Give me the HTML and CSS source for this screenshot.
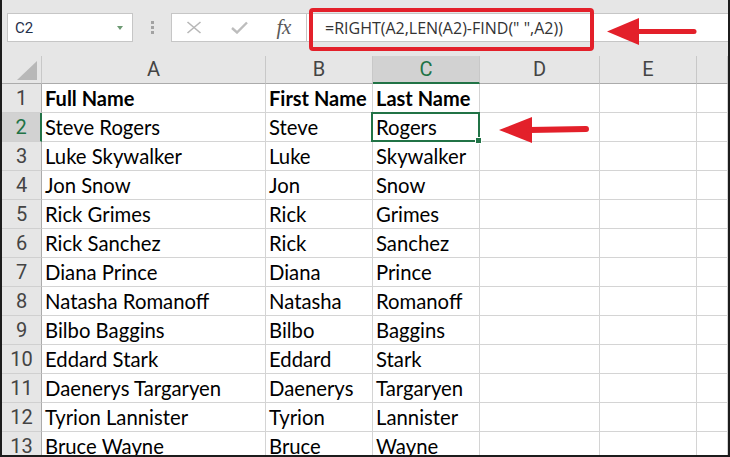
FILE: index.html
```html
<!DOCTYPE html>
<html>
<head>
<meta charset="utf-8">
<link rel="stylesheet" href="styles.css">
</head>
<body>
<div class="frame">
  <div class="toolbar">
    <div class="namebox"><span class="ref">C2</span><span class="dd"></span></div>
    <div class="grip"><i></i><i></i><i></i></div>
    <div class="fxbox">
      <span class="btn"><svg width="16" height="13" viewBox="0 0 16 13"><path d="M1.5 1 L14.5 12 M14.5 1 L1.5 12" stroke="#b7b7b7" stroke-width="1.6" fill="none"/></svg></span>
      <span class="btn"><svg width="17" height="13" viewBox="0 0 17 13"><path d="M1 7 L6 11.5 L16 1.5" stroke="#bdbdbd" stroke-width="2.4" fill="none"/></svg></span>
      <span class="btn fx">fx</span>
    </div>
    <div class="formula">=RIGHT(A2,LEN(A2)-FIND(" ",A2))</div>
  </div>
  <div class="sheet">
    <div class="row head">
      <div class="corner"><svg width="20" height="19" viewBox="0 0 20 19"><polygon points="20,0 20,19 0,19" fill="#b8b8b8"/></svg></div>
      <div class="ch">A</div><div class="ch">B</div><div class="ch on">C</div><div class="ch">D</div><div class="ch">E</div><div class="ch"></div>
    </div>
    <div class="row"><div class="rh">1</div><div class="c b">Full Name</div><div class="c b">First Name</div><div class="c b">Last Name</div><div class="c"></div><div class="c"></div><div class="c"></div></div>
    <div class="row"><div class="rh on">2</div><div class="c">Steve Rogers</div><div class="c">Steve</div><div class="c sel">Rogers</div><div class="c"></div><div class="c"></div><div class="c"></div></div>
    <div class="row"><div class="rh">3</div><div class="c">Luke Skywalker</div><div class="c">Luke</div><div class="c">Skywalker</div><div class="c"></div><div class="c"></div><div class="c"></div></div>
    <div class="row"><div class="rh">4</div><div class="c">Jon Snow</div><div class="c">Jon</div><div class="c">Snow</div><div class="c"></div><div class="c"></div><div class="c"></div></div>
    <div class="row"><div class="rh">5</div><div class="c">Rick Grimes</div><div class="c">Rick</div><div class="c">Grimes</div><div class="c"></div><div class="c"></div><div class="c"></div></div>
    <div class="row"><div class="rh">6</div><div class="c">Rick Sanchez</div><div class="c">Rick</div><div class="c">Sanchez</div><div class="c"></div><div class="c"></div><div class="c"></div></div>
    <div class="row"><div class="rh">7</div><div class="c">Diana Prince</div><div class="c">Diana</div><div class="c">Prince</div><div class="c"></div><div class="c"></div><div class="c"></div></div>
    <div class="row"><div class="rh">8</div><div class="c">Natasha Romanoff</div><div class="c">Natasha</div><div class="c">Romanoff</div><div class="c"></div><div class="c"></div><div class="c"></div></div>
    <div class="row"><div class="rh">9</div><div class="c">Bilbo Baggins</div><div class="c">Bilbo</div><div class="c">Baggins</div><div class="c"></div><div class="c"></div><div class="c"></div></div>
    <div class="row"><div class="rh">10</div><div class="c">Eddard Stark</div><div class="c">Eddard</div><div class="c">Stark</div><div class="c"></div><div class="c"></div><div class="c"></div></div>
    <div class="row"><div class="rh">11</div><div class="c">Daenerys Targaryen</div><div class="c">Daenerys</div><div class="c">Targaryen</div><div class="c"></div><div class="c"></div><div class="c"></div></div>
    <div class="row"><div class="rh">12</div><div class="c">Tyrion Lannister</div><div class="c">Tyrion</div><div class="c">Lannister</div><div class="c"></div><div class="c"></div><div class="c"></div></div>
    <div class="row"><div class="rh">13</div><div class="c">Bruce Wayne</div><div class="c">Bruce</div><div class="c">Wayne</div><div class="c"></div><div class="c"></div><div class="c"></div></div>
  </div>
  <svg class="marks" width="730" height="457" viewBox="0 0 730 457">
    <rect x="311" y="10" width="281" height="39" rx="2" fill="none" stroke="#e3202a" stroke-width="4"/>
    <polygon points="607,31.5 639,18 639,45" fill="#e3202a"/>
    <line x1="636" y1="31.5" x2="694" y2="31.5" stroke="#e3202a" stroke-width="5" stroke-linecap="round"/>
    <polygon points="499,130 532,117 532,143" fill="#e3202a"/>
    <line x1="529" y1="130" x2="586" y2="129" stroke="#e3202a" stroke-width="6" stroke-linecap="round"/>
  </svg>
</div>
</body>
</html>
```

FILE: styles.css
```css
html, body {
  margin: 0;
  padding: 0;
  background: #ffffff;
}

.frame {
  position: relative;
  width: 730px;
  height: 457px;
  box-sizing: border-box;
  border: 2px solid #1c1c1c;
  border-top: 0;
  overflow: hidden;
  background: #ffffff;
  font-family: Lato, "Noto Sans", sans-serif;
}

/* ---------- formula toolbar ---------- */
.toolbar {
  display: flex;
  align-items: flex-start;
  height: 56px;
  box-sizing: border-box;
  padding: 13px 0 0 5px;
  background: #e6e6e6;
}

.namebox {
  display: flex;
  align-items: center;
  width: 126px;
  height: 29px;
  box-sizing: border-box;
  padding: 0 9px 0 7px;
  border: 1px solid #c6c6c6;
  background: #ffffff;
}

.ref {
  font-family: Roboto, "Noto Sans", sans-serif;
  font-size: 15px;
  color: #1f2f4a;
  line-height: 27px;
  padding-top: 2px;
}

.dd {
  margin-left: auto;
  width: 0;
  height: 0;
  border-left: 3.5px solid transparent;
  border-right: 3.5px solid transparent;
  border-top: 4px solid #6c9a72;
}

.grip {
  display: flex;
  flex-direction: column;
  align-items: center;
  gap: 2px;
  width: 38px;
  padding-top: 8px;
}

.grip i {
  display: block;
  width: 3px;
  height: 3px;
  background: #a2a2a2;
}

.fxbox {
  display: flex;
  align-items: center;
  width: 136px;
  height: 29px;
  box-sizing: border-box;
  border: 1px solid #c6c6c6;
  background: #ffffff;
}

.btn {
  display: flex;
  justify-content: center;
  align-items: center;
  width: 46px;
  height: 27px;
}

.btn.fx {
  font-family: "Liberation Serif", serif;
  font-style: italic;
  font-size: 21px;
  color: #5a5a5a;
  letter-spacing: -0.5px;
}

.formula {
  flex: 1;
  height: 29px;
  box-sizing: border-box;
  border-top: 1px solid #c6c6c6;
  border-bottom: 1px solid #c6c6c6;
  background: #ffffff;
  padding-left: 18px;
  font-family: "Open Sans", "Noto Sans", sans-serif;
  font-size: 16px;
  line-height: 29px;
  color: #333333;
  white-space: pre;
}

/* ---------- grid ---------- */
.sheet {
  height: 399px;
  overflow: hidden;
}

.row {
  display: grid;
  grid-template-columns: 40px 224px 107px 107px 120px 97px 1fr;
  height: 29px;
}

.row.head {
  height: 28px;
}

.row > div {
  box-sizing: border-box;
  border-right: 1px solid #d4d4d4;
  border-bottom: 1px solid #d4d4d4;
  white-space: nowrap;
}

.corner {
  display: flex;
  justify-content: flex-end;
  align-items: flex-end;
  padding: 0 4px 3px 0;
  background: #e6e6e6;
}

.row.head > div {
  background: #e6e6e6;
  border-bottom: 1px solid #ababab;
  border-right-color: #c8c8c8;
}

.ch {
  text-align: center;
  font-family: Roboto, "Noto Sans", sans-serif;
  font-size: 20px;
  line-height: 27px;
  color: #444444;
}

.row.head > .ch.on {
  background: #d2d2d2;
  color: #217346;
  border-bottom: 2px solid #217346;
  line-height: 26px;
}

.row > .rh {
  text-align: center;
  background: #e6e6e6;
  border-right-color: #ababab;
  border-bottom-color: #d0d0d0;
  font-family: Roboto, "Noto Sans", sans-serif;
  font-size: 20px;
  line-height: 28px;
  color: #444444;
}

.row > .rh.on {
  background: #d2d2d2;
  color: #217346;
  border-right: 2px solid #217346;
}

.c {
  padding-left: 3px;
  font-size: 20.3px;
  line-height: 28px;
  color: #000000;
}

.c.b {
  font-weight: 700;
  font-size: 20px;
}

.c.sel {
  position: relative;
}

.c.sel::before {
  content: "";
  position: absolute;
  top: -1px;
  left: -2px;
  right: -1px;
  bottom: -1px;
  border: 2px solid #217346;
}

.c.sel::after {
  content: "";
  position: absolute;
  right: -3px;
  bottom: -3px;
  width: 5px;
  height: 5px;
  background: #217346;
  border: 1px solid #ffffff;
}

/* ---------- annotation overlay ---------- */
.marks {
  position: absolute;
  left: -2px;
  top: 0;
  pointer-events: none;
}
```
